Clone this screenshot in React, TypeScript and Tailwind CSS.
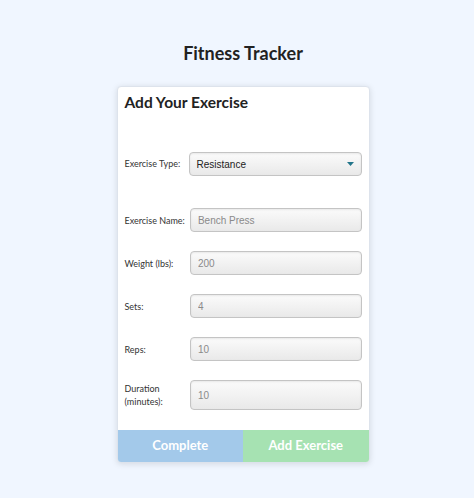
import React from 'react';

const field =
  'h-[24px] w-[173px] rounded-[4px] border border-[#c4c4c4] bg-gradient-to-b from-[#fbfbfb] to-[#e9e9e9] px-[7px] text-[10px] text-[#8a8a8a] shadow-[inset_0_1px_2px_rgba(0,0,0,0.08)] outline-none';

function Row({ label, value, className = '', tall = false }: { label: React.ReactNode; value: string; className?: string; tall?: boolean }) {
  return (
    <div className={`flex items-center ${className}`}>
      <label className="w-[66px] text-[9px] leading-[13px] text-[#333]">{label}</label>
      <input
        readOnly
        value={value}
        className={`${field} ${tall ? 'h-[30px]' : ''}`}
        style={{ fontFamily: '"Liberation Sans", Arial, sans-serif' }}
      />
    </div>
  );
}

export default function App() {
  return (
    <div className="min-h-[498px] w-full bg-[#f0f6ff] pl-[12px] pt-[40px] font-['Lato',sans-serif]">
      <h1 className="text-center text-[18px] font-bold leading-[26px] text-[#222]">Fitness Tracker</h1>

      <div className="mx-auto mt-[20px] w-[253px] overflow-hidden rounded-[4px] border border-[#dde3ec] bg-white shadow-[0_1px_6px_rgba(0,0,0,0.12)]">
        <div className="px-[7px] pb-[20px]">
          <h2 className="mt-[4px] text-[15.5px] font-bold leading-[22px] text-[#222]">Add Your Exercise</h2>

          <div className="mt-[39px] flex items-center">
            <label className="w-[66px] text-[9px] text-[#333]">Exercise Type:</label>
            <div className="relative">
              <div
                className={`${field} flex items-center text-[#222]`}
                style={{ fontFamily: '"Liberation Sans", Arial, sans-serif' }}
              >
                Resistance
              </div>
              <svg className="absolute right-[8px] top-[10px]" width="7" height="4" viewBox="0 0 7 4">
                <path d="M0 0h7L3.5 4z" fill="#22758a" />
              </svg>
            </div>
          </div>

          <Row className="mt-[32px]" label="Exercise Name:" value="Bench Press" />
          <Row className="mt-[19px]" label="Weight (lbs):" value="200" />
          <Row className="mt-[19px]" label="Sets:" value="4" />
          <Row className="mt-[19px]" label="Reps:" value="10" />
          <Row
            className="mt-[19px]"
            tall
            label={
              <>
                Duration
                <br />
                (minutes):
              </>
            }
            value="10"
          />
        </div>

        <div className="flex">
          <button className="h-[32px] flex-1 bg-[#a3c9ea] text-[13px] font-bold text-white">Complete</button>
          <button className="h-[32px] flex-1 bg-[#a6e2b2] text-[13px] font-bold text-white">Add Exercise</button>
        </div>
      </div>
    </div>
  );
}
